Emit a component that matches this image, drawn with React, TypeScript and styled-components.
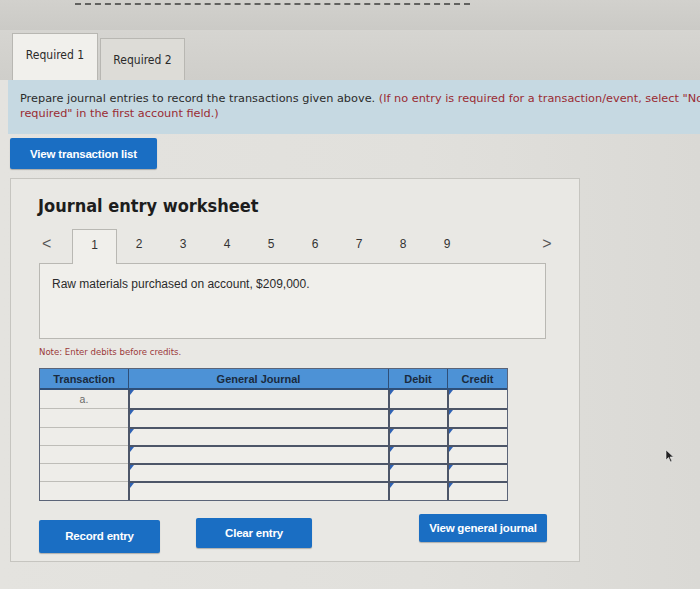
import React from "react";
import styled, { createGlobalStyle } from "styled-components";

const Global = createGlobalStyle`
  html, body { margin: 0; padding: 0; }
  body {
    background: #dfded9;
    font-family: "Liberation Sans", Arial, sans-serif;
    width: 700px;
    height: 589px;
    overflow: hidden;
  }
`;

const Page = styled.div`
  position: relative;
  width: 700px;
  height: 589px;
  background: linear-gradient(90deg, #e4e3df 0%, #e1e0dc 60%, #dad9d5 100%);
  overflow: hidden;
`;

const TopStrip = styled.div`
  height: 30px;
  background: linear-gradient(180deg, #d2d1cd, #cbcac6);
  display: flex;
  align-items: flex-start;
  padding-left: 75px;
`;

const Dashes = styled.div`
  margin-top: 3px;
  width: 395px;
  border-top: 2px dashed #4e4e4c;
  opacity: 0.85;
`;

const TabRow = styled.div`
  height: 50px;
  display: flex;
  align-items: flex-end;
  padding-left: 12px;
  gap: 2px;
  background: linear-gradient(180deg, #d6d5d1, #cfceca);
`;

const Tab = styled.div<{ $active?: boolean }>`
  box-sizing: border-box;
  width: ${(p) => (p.$active ? 86 : 85)}px;
  height: ${(p) => (p.$active ? 47 : 42)}px;
  display: flex;
  align-items: center;
  justify-content: center;
  padding-bottom: ${(p) => (p.$active ? 4 : 0)}px;
  background: ${(p) => (p.$active ? "#f1f0ec" : "#dddcd7")};
  border: 1px solid #b8b7b2;
  border-bottom: none;
  font-family: "DejaVu Sans Condensed", "DejaVu Sans", sans-serif;
  font-size: 12px;
  color: #2a2a2a;
`;

const InfoBand = styled.div`
  margin-left: 8px;
  height: 54px;
  box-sizing: border-box;
  padding: 11px 0 0 12px;
  background: #c6d9e2;
  font-family: "DejaVu Sans", Verdana, sans-serif;
  font-size: 11.3px;
  line-height: 15px;
  color: #2b2b2b;
  white-space: nowrap;
  overflow: hidden;
`;

const Red = styled.span`
  color: #9a2b33;
`;

const BlueButton = styled.button<{ $w: number; $h?: number; $top?: number }>`
  width: ${(p) => p.$w}px;
  height: ${(p) => p.$h ?? 31}px;
  margin-top: ${(p) => p.$top ?? 0}px;
  border: none;
  border-radius: 2px;
  background: #1a6ec3;
  color: #ffffff;
  font-family: "Liberation Sans", Arial, sans-serif;
  font-weight: bold;
  font-size: 11.5px;
  letter-spacing: -0.2px;
  box-shadow: 0 1px 1px rgba(0, 0, 0, 0.25);
  padding: 0;
`;

const ButtonBar = styled.div`
  padding: 4px 0 0 10px;
  height: 40px;
`;

const Panel = styled.div`
  margin: 0 0 0 10px;
  width: 570px;
  height: 384px;
  box-sizing: border-box;
  background: #e9e8e4;
  border: 1px solid #c6c5c0;
  padding: 16px 34px 0 27px;
`;

const Title = styled.h2`
  margin: 0;
  font-family: "DejaVu Sans Condensed", "DejaVu Sans", sans-serif;
  font-weight: bold;
  font-size: 18px;
  color: #1d1d1d;
  height: 33px;
`;

const Pager = styled.div`
  display: flex;
  align-items: flex-end;
  height: 35px;
  margin-right: -14px;
`;

const Arrow = styled.div<{ $right?: boolean }>`
  width: ${(p) => (p.$right ? 24 : 34)}px;
  height: 28px;
  display: flex;
  align-items: center;
  justify-content: ${(p) => (p.$right ? "center" : "flex-start")};
  padding-left: ${(p) => (p.$right ? 0 : 4)}px;
  box-sizing: border-box;
  margin-left: ${(p) => (p.$right ? "auto" : "0")};
  color: #555;
  font-size: 16px;
  margin-bottom: 5px;
`;

const PageNum = styled.div<{ $active?: boolean }>`
  box-sizing: border-box;
  width: ${(p) => (p.$active ? 45 : 44)}px;
  height: 35px;
  display: flex;
  align-items: center;
  justify-content: center;
  padding-bottom: 4px;
  font-size: 12px;
  color: #333;
  background: ${(p) => (p.$active ? "#f0efeb" : "transparent")};
  border: ${(p) => (p.$active ? "1px solid #b9b8b3" : "none")};
  border-bottom: none;
  margin-bottom: ${(p) => (p.$active ? "-1px" : "0")};
  position: relative;
  z-index: 1;
`;

const ContentBox = styled.div`
  box-sizing: border-box;
  width: 507px;
  height: 76px;
  margin-left: 1px;
  background: #f0efeb;
  border: 1px solid #b9b8b3;
  padding: 13px 12px;
  font-size: 12px;
  color: #2b2b2b;
`;

const Note = styled.div`
  margin: 7px 0 0 1px;
  height: 22px;
  font-family: "DejaVu Sans Condensed", "DejaVu Sans", sans-serif;
  font-size: 9.5px;
  color: #9b3a3a;
`;

const Table = styled.div`
  margin-left: 1px;
  width: 469px;
  display: grid;
  grid-template-columns: 88px 260px 59px 60px;
  box-sizing: border-box;
  border: 1px solid #5b6478;
  background: #eeede9;
`;

const HeadCell = styled.div<{ $left?: boolean }>`
  height: 21px;
  display: flex;
  align-items: center;
  justify-content: center;
  background: #4d92d6;
  color: #1a2a3d;
  font-size: 11px;
  font-weight: bold;
  border-left: ${(p) => (p.$left ? "none" : "1px solid #2f4f78")};
  border-bottom: 2px solid #2f4f78;
  box-sizing: border-box;
`;

const TxCell = styled.div<{ $first?: boolean }>`
  height: 18.3px;
  box-sizing: border-box;
  display: flex;
  align-items: center;
  justify-content: center;
  font-size: 10.5px;
  color: #6a6a6a;
  border-top: ${(p) => (p.$first ? "none" : "1px solid #bebdb8")};
`;

const InputCell = styled.div<{ $first?: boolean }>`
  position: relative;
  height: 18.3px;
  box-sizing: border-box;
  border-left: 2px solid #4d5668;
  border-top: ${(p) => (p.$first ? "none" : "2px solid #4d5668")};
  background: #efeeea;
`;

const Marker = styled.span`
  position: absolute;
  left: 0;
  top: 0;
  width: 0;
  height: 0;
  border-top: 5px solid #2f62b4;
  border-right: 4px solid transparent;
`;

const Actions = styled.div`
  display: flex;
  align-items: flex-start;
  width: 508px;
  margin-top: 13px;
  margin-left: 1px;
  gap: 36px;
`;

const Push = styled.div`
  margin-left: auto;
`;

const Cursor = styled.svg`
  position: absolute;
  left: 665px;
  top: 449px;
`;

const rows = ["a.", "", "", "", "", ""];

export default function App() {
  return (
    <Page>
      <Global />
      <TopStrip>
        <Dashes />
      </TopStrip>
      <TabRow>
        <Tab $active>Required 1</Tab>
        <Tab>Required 2</Tab>
      </TabRow>
      <InfoBand>
        Prepare journal entries to record the transactions given above.{" "}
        <Red>
          (If no entry is required for a transaction/event, select "No journal entry
        </Red>
        <br />
        <Red>required" in the first account field.)</Red>
      </InfoBand>
      <ButtonBar>
        <BlueButton $w={147}>View transaction list</BlueButton>
      </ButtonBar>
      <Panel>
        <Title>Journal entry worksheet</Title>
        <Pager>
          <Arrow>&lt;</Arrow>
          {[1, 2, 3, 4, 5, 6, 7, 8, 9].map((n) => (
            <PageNum key={n} $active={n === 1}>
              {n}
            </PageNum>
          ))}
          <Arrow $right>&gt;</Arrow>
        </Pager>
        <ContentBox>Raw materials purchased on account, $209,000.</ContentBox>
        <Note>Note: Enter debits before credits.</Note>
        <Table>
          <HeadCell $left>Transaction</HeadCell>
          <HeadCell>General Journal</HeadCell>
          <HeadCell>Debit</HeadCell>
          <HeadCell>Credit</HeadCell>
          {rows.map((r, i) => (
            <React.Fragment key={i}>
              <TxCell $first={i === 0}>{r}</TxCell>
              <InputCell $first={i === 0}>
                <Marker />
              </InputCell>
              <InputCell $first={i === 0}>
                <Marker />
              </InputCell>
              <InputCell $first={i === 0}>
                <Marker />
              </InputCell>
            </React.Fragment>
          ))}
        </Table>
        <Actions>
          <BlueButton $w={121} $h={33} $top={6}>Record entry</BlueButton>
          <BlueButton $w={116} $h={30} $top={4}>Clear entry</BlueButton>
          <Push>
            <BlueButton $w={128} $h={28}>View general journal</BlueButton>
          </Push>
        </Actions>
      </Panel>
      <Cursor width="10" height="14" viewBox="0 0 10 14">
        <path d="M1 1 L1 11 L3.5 8.5 L5.5 13 L7 12.3 L5 8 L8.5 8 Z" fill="#222" stroke="#eee" strokeWidth="0.6" />
      </Cursor>
    </Page>
  );
}
